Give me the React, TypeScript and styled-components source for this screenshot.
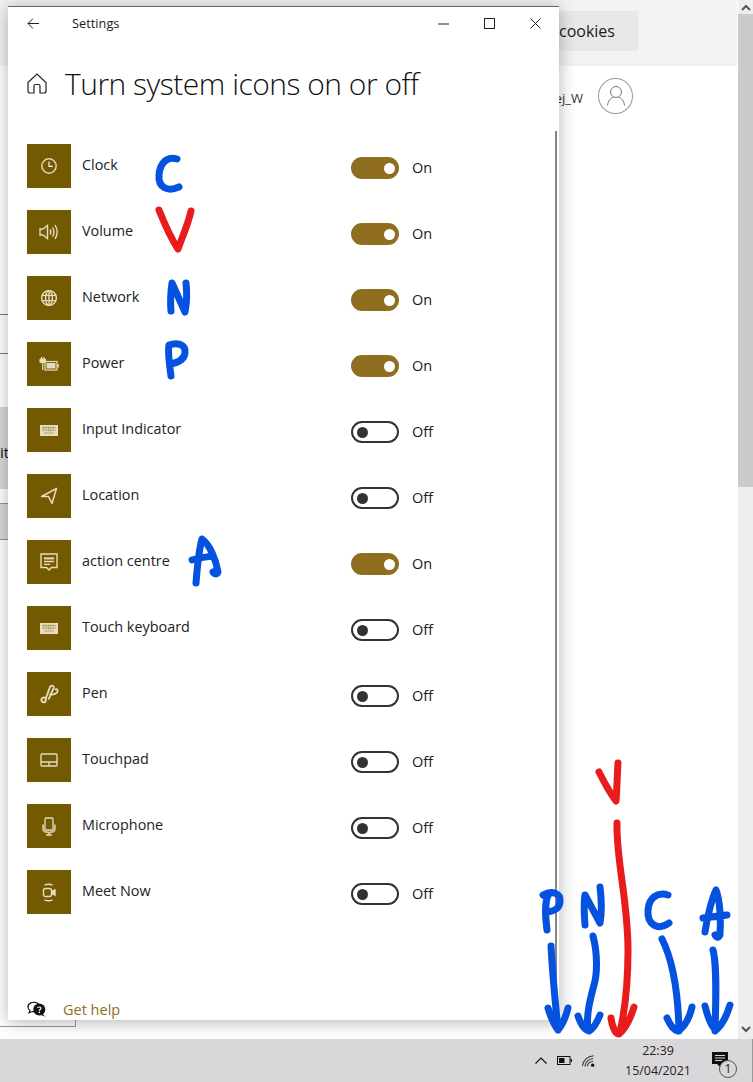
import React from 'react';
import styled, { createGlobalStyle } from 'styled-components';

const rows = [
  { label: 'Clock', on: true, icon: 'clock' },
  { label: 'Volume', on: true, icon: 'volume' },
  { label: 'Network', on: true, icon: 'globe' },
  { label: 'Power', on: true, icon: 'power' },
  { label: 'Input Indicator', on: false, icon: 'keyboard' },
  { label: 'Location', on: false, icon: 'location' },
  { label: 'action centre', on: true, icon: 'action' },
  { label: 'Touch keyboard', on: false, icon: 'keyboard' },
  { label: 'Pen', on: false, icon: 'pen' },
  { label: 'Touchpad', on: false, icon: 'touchpad' },
  { label: 'Microphone', on: false, icon: 'mic' },
  { label: 'Meet Now', on: false, icon: 'meet' },
];

const RowIcon = ({ name }: { name: string }) => {
  switch (name) {
    case 'clock':
      return (
        <svg width="18" height="18" viewBox="0 0 18 18" fill="none" stroke="#dfd4b2" strokeWidth="1.5">
          <circle cx="9" cy="9" r="7.2" />
          <path d="M9 4.5V9.4H12.6" stroke="#fff" strokeWidth="1.1" />
        </svg>
      );
    case 'volume':
      return (
        <svg width="20" height="18" viewBox="0 0 20 18" fill="none" stroke="#e6dcc0" strokeWidth="1.4">
          <path d="M1 6H4L8.5 2.5V15.5L4 12H1Z" />
          <path d="M11 6.5C12 8 12 10 11 11.5" />
          <path d="M13.5 4.5C15.2 7.2 15.2 10.8 13.5 13.5" />
          <path d="M16 2C18.8 6.5 18.8 11.5 16 16" />
        </svg>
      );
    case 'globe':
      return (
        <svg width="18" height="18" viewBox="0 0 18 18" fill="none" stroke="#e6dcc0" strokeWidth="1.4">
          <circle cx="9" cy="9" r="7.4" />
          <ellipse cx="9" cy="9" rx="3.4" ry="7.4" />
          <path d="M2 6.4H16M2 11.6H16M9 1.6V16.4" />
        </svg>
      );
    case 'power':
      return (
        <svg width="20" height="14" viewBox="0 0 20 14" fill="none" stroke="#e6dcc0" strokeWidth="1.2">
          <path d="M2.5 0V2M5 0V2" />
          <rect x="1" y="2" width="5.5" height="3.5" rx="1" fill="#e6dcc0" />
          <path d="M3.7 5.5V13" />
          <rect x="6" y="4.5" width="12" height="8.5" />
          <path d="M7.5 6H16.5V11.5H7.5Z" fill="#e6dcc0" stroke="none" />
          <path d="M19 7V10.5" strokeWidth="1.6" />
        </svg>
      );
    case 'keyboard':
      return (
        <svg width="18" height="11" viewBox="0 0 18 11" fill="none">
          <rect x="0" y="0" width="18" height="11" fill="#e6dcc0" />
          <path
            d="M2 2.6H16M2 5.2H16M4 8H14M3.6 1.5V4.5M6 1.5V4.5M8.4 1.5V6.5M10.8 1.5V6.5M13.2 1.5V4.5"
            stroke="#a8965a"
            strokeWidth="0.8"
          />
        </svg>
      );
    case 'location':
      return (
        <svg width="18" height="18" viewBox="0 0 18 18" fill="none" stroke="#e6dcc0" strokeWidth="1.5">
          <path d="M16.5 1.5L1.5 9.5H8.5L12 16.5Z" strokeLinejoin="round" />
        </svg>
      );
    case 'action':
      return (
        <svg width="18" height="18" viewBox="0 0 18 18" fill="none" stroke="#e6dcc0" strokeWidth="1.4">
          <path d="M1 1H17V14.5H11.5L9 17L6.5 14.5H1Z" />
          <path d="M4 4.4H14V6.4H4Z" fill="#e6dcc0" stroke="none" />
          <path d="M4 8.5H14M4 11.4H10" />
        </svg>
      );
    case 'pen':
      return (
        <svg width="19" height="20" viewBox="0 0 18 18" fill="none" stroke="#e6dcc0" strokeWidth="1.7">
          <path d="M5 16.6C1.4 17.6 0.2 14.4 2.6 12.6C5 11 6.4 13.6 5 16.6Z" />
          <path d="M5 14.6L9.6 2C11.4 0.4 13.6 1.2 13 3.2L8 14.4" />
          <path d="M9 9C12 10.4 17.4 8.6 16.6 5.4C16.2 4.2 15 4.2 14 5" />
        </svg>
      );
    case 'touchpad':
      return (
        <svg width="18" height="14" viewBox="0 0 18 14" fill="none" stroke="#e6dcc0" strokeWidth="1.4">
          <rect x="1" y="1" width="16" height="12" rx="1" />
          <path d="M1 9H17M9 9V13" />
        </svg>
      );
    case 'mic':
      return (
        <svg width="14" height="19" viewBox="0 0 14 19" fill="none" stroke="#e6dcc0" strokeWidth="1.3">
          <rect x="3" y="1" width="8" height="12" rx="1" />
          <path d="M1.2 7.5V12C1.2 14 3 15.4 7 15.4S12.8 14 12.8 12V7.5" strokeWidth="2" stroke="#cfc29a" />
          <path d="M7 15.2V18M4 18H10" />
        </svg>
      );
    default:
      return (
        <svg width="14" height="19" viewBox="0 0 14 19" fill="none" stroke="#e6dcc0" strokeWidth="1.4">
          <path d="M2.5 2.2C5 1 8 1 10.5 2.2M2.5 16.8C5 18 8 18 10.5 16.8" />
          <rect x="1.5" y="5.5" width="8" height="8" rx="2" />
          <path d="M10 8.5L13 7V12L10 10.5" fill="#e6dcc0" />
        </svg>
      );
  }
};

const App = () => (
  <>
    <GlobalStyle />
    <Screen>
      <Browser>
        <Page>
          <TopBand>
            <CookieButton>cookies</CookieButton>
          </TopBand>
          <UserRow>
            <UserName>ej_W</UserName>
            <Avatar>
              <svg width="22" height="24" viewBox="0 0 22 24" fill="none" stroke="#777" strokeWidth="1">
                <circle cx="11" cy="8" r="5.5" />
                <path d="M2.5 21.5C3 16.5 6 14 8.5 13M19.5 21.5C19 16.5 16 14 13.5 13" />
              </svg>
            </Avatar>
          </UserRow>
          <BehindLine $gap={188} />
          <BehindLine $gap={38} />
          <BehindBlock $gap={53} $height={82}>it</BehindBlock>
          <BehindBlock $gap={14} $height={37} $lined />
          <BehindBox />
        </Page>
        <PageScroll>
          <ScrollArrow>
            <svg width="10" height="7" viewBox="0 0 10 7" fill="none" stroke="#555" strokeWidth="2">
              <path d="M1 6L5 2L9 6" />
            </svg>
          </ScrollArrow>
          <ScrollThumb />
          <ScrollArrow $bottom>
            <svg width="10" height="7" viewBox="0 0 10 7" fill="none" stroke="#555" strokeWidth="2">
              <path d="M1 1L5 5L9 1" />
            </svg>
          </ScrollArrow>
        </PageScroll>
      </Browser>
      <Taskbar>
        <TrayIcons>
          <svg width="12" height="7" viewBox="0 0 12 7" fill="none" stroke="#111" strokeWidth="1.2">
            <path d="M0.5 6.5L6 1L11.5 6.5" />
          </svg>
          <svg width="15" height="9" viewBox="0 0 15 9" fill="none" stroke="#111" strokeWidth="1">
            <rect x="0.5" y="0.5" width="12.5" height="8" />
            <rect x="2" y="2" width="5.5" height="5" fill="#111" stroke="none" />
            <path d="M14.3 3V6" strokeWidth="1.3" />
          </svg>
          <svg width="13" height="12" viewBox="0 0 14 13" fill="none" stroke="#333" strokeWidth="1.1">
            <path d="M0.5 12C1 6 6 1.2 12.5 0.7M3 12.3C3.5 8 7 4.2 12 3.7M5.5 12.4C6 10 8.4 7.4 12 6.8" />
            <circle cx="11.5" cy="11" r="1.8" fill="#111" stroke="none" />
          </svg>
        </TrayIcons>
        <Clock>
          <span>22:39</span>
          <span>15/04/2021</span>
        </Clock>
        <Notify>
          <svg width="16" height="17" viewBox="0 0 16 17" fill="#111">
            <path fillRule="evenodd" d="M0 0H16V12H11L8 15L5 12H0ZM3 3V4H13V3ZM3 5.5V6.5H13V5.5ZM3 8V9H10V8Z" />
          </svg>
          <NotifyBadge>1</NotifyBadge>
        </Notify>
      </Taskbar>
      <Window>
        <TitleBar>
          <TitleLeft>
            <svg width="12" height="11" viewBox="0 0 12 11" fill="none" stroke="#222" strokeWidth="1">
              <path d="M12 5.5H1M6 0.5L1 5.5L6 10.5" />
            </svg>
            <WindowName>Settings</WindowName>
          </TitleLeft>
          <WindowControls>
            <svg width="11" height="11" viewBox="0 0 11 11" stroke="#222" strokeWidth="1">
              <path d="M0 6H11" />
            </svg>
            <svg width="11" height="11" viewBox="0 0 11 11" fill="none" stroke="#222" strokeWidth="1">
              <rect x="0.5" y="0.5" width="10" height="10" />
            </svg>
            <svg width="11" height="11" viewBox="0 0 11 11" stroke="#222" strokeWidth="1">
              <path d="M0.5 0.5L10.5 10.5M10.5 0.5L0.5 10.5" />
            </svg>
          </WindowControls>
        </TitleBar>
        <Heading>
          <svg width="20" height="21" viewBox="0 0 20 21" fill="none" stroke="#222" strokeWidth="1.2">
            <path d="M1 9.5L10 1L19 9.5V18C19 19.5 18 20 17 20H13V13C13 12 12.5 11.5 11.5 11.5H8.5C7.5 11.5 7 12 7 13V20H3C2 20 1 19.5 1 18Z" />
          </svg>
          <HeadingText>Turn system icons on or off</HeadingText>
        </Heading>
        <List>
          {rows.map((row) => (
            <Row key={row.label}>
              <IconTile>
                <RowIcon name={row.icon} />
              </IconTile>
              <RowLabel>{row.label}</RowLabel>
              <Switch $on={row.on}>
                <Knob $on={row.on} />
              </Switch>
              <SwitchLabel>{row.on ? 'On' : 'Off'}</SwitchLabel>
            </Row>
          ))}
        </List>
        <Help>
          <svg width="20" height="17" viewBox="0 0 22 18" fill="none">
            <path d="M7.5 1C3.5 1 1 3.4 1 6.2C1 8 2 9.4 3.4 10.2L2.2 12.6L6 11.2C7 11.4 8 11.4 9 11.2" fill="#fff" stroke="#111" strokeWidth="1.2" />
            <path d="M1 6.2C1 3.4 3.5 1 7.5 1C10 1 12 2 13 3.4" stroke="#111" strokeWidth="1.2" />
            <circle cx="13.5" cy="9" r="6.6" fill="#111" />
            <path d="M17 14L20.5 17L15 15Z" fill="#111" />
            <path d="M11.6 7.4C11.8 5.8 15.4 5.8 15.4 7.6C15.4 9 13.5 9 13.5 10.4" stroke="#fff" strokeWidth="1.3" />
            <circle cx="13.5" cy="12.2" r="0.9" fill="#fff" />
          </svg>
          <HelpLink>Get help</HelpLink>
        </Help>
        <WindowScroll />
      </Window>
      <Annotations width="753" height="1082" viewBox="0 0 753 1082" fill="none" strokeLinecap="round" strokeLinejoin="round">
        <g stroke="#0551e0" strokeWidth="7">
          <path d="M177 159C168 156 160 162 159 175C158 188 168 192 179 187" />
          <path d="M171 311C170 300 171 290 172 283L185 312C187 302 187 292 186 283" />
          <path d="M171 376C169 362 168 350 169 345C177 342 186 344 185 353C184 361 176 363 170 364" />
          <path d="M196 583C197 570 199 550 202 539C210 545 216 560 218 572C217 575 214 574 213 572M192 560C198 558 206 557 212 556" />
          <path d="M549 894C545 899 545 915 547 930M543 895C552 890 561 893 560 902C559 910 551 912 546 912" />
          <path d="M585 925C584 912 584 900 585 895L600 923C602 912 601 895 600 887" />
          <path d="M668 895C658 892 649 897 648 910C647 925 658 931 669 923" />
          <path d="M705 932C707 918 712 898 716 890C720 900 721 920 720 935C718 939 716 937 715 935M703 918C711 917 720 916 727 915" />
          <path d="M551 946C552 965 556 1010 558 1030M548 1008C551 1018 555 1026 558 1030C563 1024 566 1016 568 1008" />
          <path d="M593 936C598 955 597 975 594 985C590 1000 586 1015 588 1030M578 1016C581 1024 584 1030 589 1031C595 1028 598 1020 600 1015" />
          <path d="M662 939C670 955 678 985 679 1031M667 1018C670 1025 674 1030 678 1031C684 1027 689 1020 692 1007" />
          <path d="M713 950C717 965 716 1000 715 1031M705 1006C708 1018 712 1028 716 1030C722 1025 727 1015 730 1005" />
        </g>
        <g stroke="#e81c1c" strokeWidth="7">
          <path d="M159 210C165 225 172 240 178 249C181 240 188 225 191 211" />
          <path d="M599 772C604 782 610 793 616 801C617 790 617 778 618 763" />
          <path d="M617 823C616 860 628 900 628 950C628 980 625 1010 620 1032M611 1018C612 1026 615 1034 619 1034C624 1030 630 1020 634 1007" />
        </g>
      </Annotations>
    </Screen>
  </>
);

export default App;

const GlobalStyle = createGlobalStyle`
  html, body {
    margin: 0;
    padding: 0;
    background: #fff;
  }
  * {
    box-sizing: border-box;
  }
`;

const Screen = styled.div`
  position: relative;
  width: 753px;
  height: 1082px;
  display: flex;
  flex-direction: column;
  overflow: hidden;
  font-family: 'Open Sans', 'Noto Sans', sans-serif;
  color: #1a1a1a;
`;

const Browser = styled.div`
  flex: 1;
  display: flex;
  min-height: 0;
`;

const Page = styled.div`
  flex: 1;
  display: flex;
  flex-direction: column;
  background: #fff;
`;

const TopBand = styled.div`
  height: 66px;
  padding: 11px 0 0 558px;
  background: #f2f2f2;
`;

const CookieButton = styled.div`
  width: 80px;
  height: 40px;
  padding-left: 1px;
  line-height: 40px;
  font-size: 16px;
  background: #e8e8e8;
`;

const UserRow = styled.div`
  height: 60px;
  display: flex;
  justify-content: flex-end;
  align-items: flex-start;
  gap: 15px;
  padding: 12px 104px 0 0;
`;

const UserName = styled.span`
  margin-top: 11px;
  font-size: 13px;
  color: #333;
`;

const Avatar = styled.div`
  width: 35px;
  height: 36px;
  border: 1px solid #999;
  border-radius: 50%;
  display: flex;
  align-items: center;
  justify-content: center;
`;

const BehindLine = styled.div<{ $gap: number }>`
  width: 12px;
  height: 1px;
  margin-top: ${({ $gap }) => $gap}px;
  background: #777;
`;

const BehindBlock = styled.div<{ $gap: number; $height: number; $lined?: boolean }>`
  width: 12px;
  height: ${({ $height }) => $height}px;
  margin-top: ${({ $gap }) => $gap}px;
  padding-top: 4px;
  background: #d9d9d9;
  font-size: 15px;
  line-height: ${({ $height }) => $height}px;
  color: #111;
  overflow: hidden;
  border-top: ${({ $lined }) => ($lined ? '1px solid #999' : 'none')};
  border-bottom: ${({ $lined }) => ($lined ? '1px solid #999' : 'none')};
`;

const BehindBox = styled.div`
  width: 76px;
  height: 40px;
  margin-top: 447px;
  border-right: 1px solid #999;
  border-bottom: 1px solid #999;
`;

const PageScroll = styled.div`
  width: 15px;
  margin-left: 1px;
  display: flex;
  flex-direction: column;
  background: #eeeeee;
`;

const ScrollArrow = styled.div<{ $bottom?: boolean }>`
  height: 14px;
  margin-top: ${({ $bottom }) => ($bottom ? 'auto' : '0')};
  margin-bottom: ${({ $bottom }) => ($bottom ? '3px' : '0')};
  display: flex;
  align-items: center;
  justify-content: center;
`;

const ScrollThumb = styled.div`
  height: 473px;
  background: #cbcbcb;
`;

const Taskbar = styled.div`
  height: 43px;
  display: flex;
  align-items: center;
  padding-left: 535px;
  background: #d9d7da;
  border-right: 1px solid #999;
`;

const TrayIcons = styled.div`
  width: 85px;
  display: flex;
  align-items: center;
  gap: 10px;
`;

const Clock = styled.div`
  width: 76px;
  display: flex;
  flex-direction: column;
  align-items: center;
  gap: 4px;
  font-size: 12.4px;
  line-height: 16px;
  color: #222;
`;

const Notify = styled.div`
  position: relative;
  margin-left: 16px;
  display: flex;
`;

const NotifyBadge = styled.span`
  position: absolute;
  left: 7px;
  top: 8px;
  width: 18px;
  height: 18px;
  border: 1px solid #555;
  border-radius: 50%;
  background: #d9d7da;
  font-size: 12px;
  line-height: 16px;
  text-align: center;
`;

const Window = styled.div`
  position: absolute;
  left: 8px;
  top: 6px;
  width: 551px;
  height: 1014px;
  display: flex;
  flex-direction: column;
  background: #fff;
  border-top: 1px solid #666;
  box-shadow: 0 2px 16px rgba(0, 0, 0, 0.3);
`;

const TitleBar = styled.div`
  height: 32px;
  display: flex;
  justify-content: space-between;
  align-items: center;
  padding: 0 18px 0 19px;
`;

const TitleLeft = styled.div`
  display: flex;
  align-items: center;
  gap: 33px;
`;

const WindowName = styled.span`
  font-size: 12.8px;
`;

const WindowControls = styled.div`
  display: flex;
  align-items: center;
  gap: 35px;
`;

const Heading = styled.div`
  height: 52px;
  margin-top: 18px;
  display: flex;
  align-items: center;
  gap: 18px;
  padding-left: 19px;
`;

const HeadingText = styled.h1`
  margin: 0;
  font-size: 30px;
  font-weight: 300;
  letter-spacing: -0.5px;
  color: #111;
`;

const List = styled.div`
  flex: 1;
  display: flex;
  flex-direction: column;
  gap: 22px;
  padding: 35px 0 0 19px;
`;

const Row = styled.div`
  height: 44px;
  display: flex;
  align-items: flex-start;
`;

const IconTile = styled.div`
  width: 44px;
  height: 44px;
  display: flex;
  align-items: center;
  justify-content: center;
  background: #735a00;
`;

const RowLabel = styled.span`
  width: 269px;
  margin: 10px 0 0 11px;
  font-size: 14.4px;
  line-height: 22px;
  color: #222;
`;

const Switch = styled.div<{ $on: boolean }>`
  width: 48px;
  height: 22px;
  margin-top: 13px;
  display: flex;
  align-items: center;
  justify-content: ${({ $on }) => ($on ? 'flex-end' : 'flex-start')};
  padding: 0 2px 0 4px;
  border-radius: 11px;
  background: ${({ $on }) => ($on ? '#8f6e20' : '#fff')};
  border: 2px solid ${({ $on }) => ($on ? '#8f6e20' : '#333')};
`;

const Knob = styled.div<{ $on: boolean }>`
  width: 11px;
  height: 11px;
  border-radius: 50%;
  background: ${({ $on }) => ($on ? '#fff' : '#333')};
`;

const SwitchLabel = styled.span`
  margin: 13px 0 0 13px;
  font-size: 14.5px;
  line-height: 22px;
`;

const Help = styled.div`
  height: 22px;
  display: flex;
  align-items: center;
  gap: 16px;
  padding: 0 0 0 19px;
`;

const HelpLink = styled.span`
  font-size: 14.5px;
  color: #8f6e20;
`;

const WindowScroll = styled.div`
  position: absolute;
  top: 124px;
  right: 2px;
  bottom: 0;
  width: 2px;
  background: #858585;
`;

const Annotations = styled.svg`
  position: absolute;
  left: 0;
  top: 0;
  pointer-events: none;
`;
